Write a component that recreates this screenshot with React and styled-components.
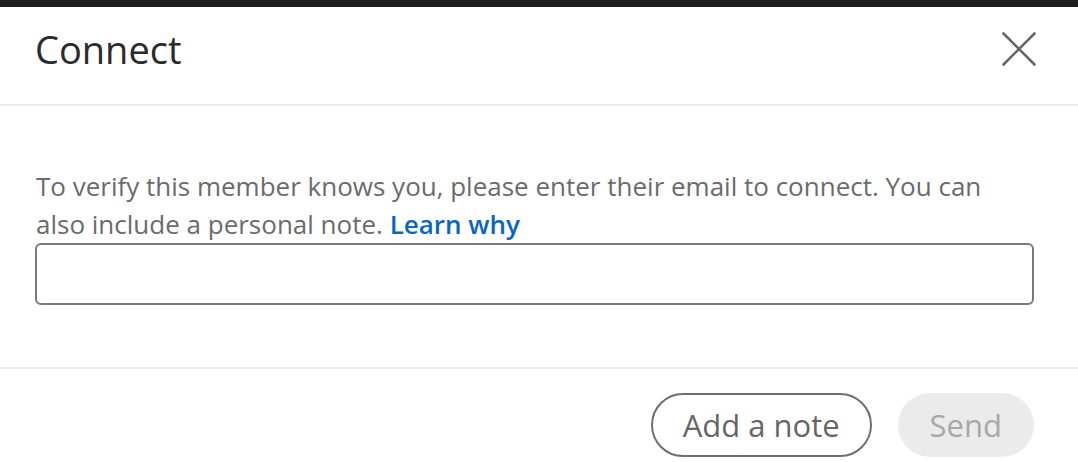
import React from "react";
import styled, { createGlobalStyle } from "styled-components";

const GlobalStyle = createGlobalStyle`
  body {
    margin: 0;
    background: #ffffff;
    font-family: "Open Sans", "Noto Sans", Arial, sans-serif;
  }
`;

const TopBar = styled.div`
  height: 7px;
  background: #1f1f1f;
`;

const Modal = styled.div`
  width: 1078px;
  background: #fff;
`;

const Header = styled.div`
  display: flex;
  align-items: center;
  justify-content: space-between;
  padding: 0 36px 0 35px;
  border-bottom: 2px solid #ebebeb;
  box-sizing: border-box;
  height: 99px;
`;

const Title = styled.h2`
  margin: 0;
  margin-top: -14px;
  font-size: 38px;
  font-weight: 400;
  color: #2b2b2b;
`;

const CloseBtn = styled.button`
  display: flex;
  align-items: center;
  justify-content: center;
  width: 44px;
  height: 44px;
  margin-top: -14px;
  margin-right: 1px;
  padding: 0;
  background: none;
  border: none;
  cursor: pointer;
`;

const Body = styled.div`
  padding: 61px 44px 62px 35px;
  border-bottom: 2px solid #ebebeb;
`;

const Message = styled.p`
  max-width: 985px;
  margin: 0 0 0 1px;
  font-size: 26px;
  line-height: 38px;
  color: #6b6b6b;
`;

const LearnLink = styled.a`
  color: #0a66c2;
  font-weight: 600;
  text-decoration: none;
`;

const EmailInput = styled.input`
  display: block;
  box-sizing: border-box;
  width: 100%;
  height: 62px;
  margin-top: 0;
  border: 2px solid #7a7a7a;
  border-radius: 6px;
  font-size: 22px;
  outline: none;
`;

const Footer = styled.div`
  display: flex;
  justify-content: flex-end;
  gap: 26px;
  padding: 24px 44px 0 0;
`;

const PillButton = styled.button`
  height: 64px;
  padding: 0 ${(p) => (p.$primary ? 32 : 30)}px;
  border-radius: 32px;
  font-family: inherit;
  font-size: 31px;
  font-weight: 500;
  cursor: pointer;
  border: ${(p) => (p.$primary ? "none" : "2px solid #6e6e6e")};
  background: ${(p) => (p.$primary ? "#ebebeb" : "#fff")};
  color: ${(p) => (p.$primary ? "#a8a8a8" : "#666")};
  box-sizing: border-box;
`;

export default function App() {
  return (
    <>
      <GlobalStyle />
      <TopBar />
      <Modal>
        <Header>
          <Title>Connect</Title>
          <CloseBtn aria-label="Dismiss">
            <svg width="36" height="36" viewBox="0 0 36 36">
              <path
                d="M2.5 2.5 L33.5 33.5 M33.5 2.5 L2.5 33.5"
                stroke="#666"
                strokeWidth="2.6"
                strokeLinecap="round"
              />
            </svg>
          </CloseBtn>
        </Header>
        <Body>
          <Message>
            To verify this member knows you, please enter their email to
            connect. You can also include a personal note.{" "}
            <LearnLink href="#">Learn why</LearnLink>
          </Message>
          <EmailInput type="email" />
        </Body>
        <Footer>
          <PillButton>Add a note</PillButton>
          <PillButton $primary disabled>
            Send
          </PillButton>
        </Footer>
      </Modal>
    </>
  );
}
